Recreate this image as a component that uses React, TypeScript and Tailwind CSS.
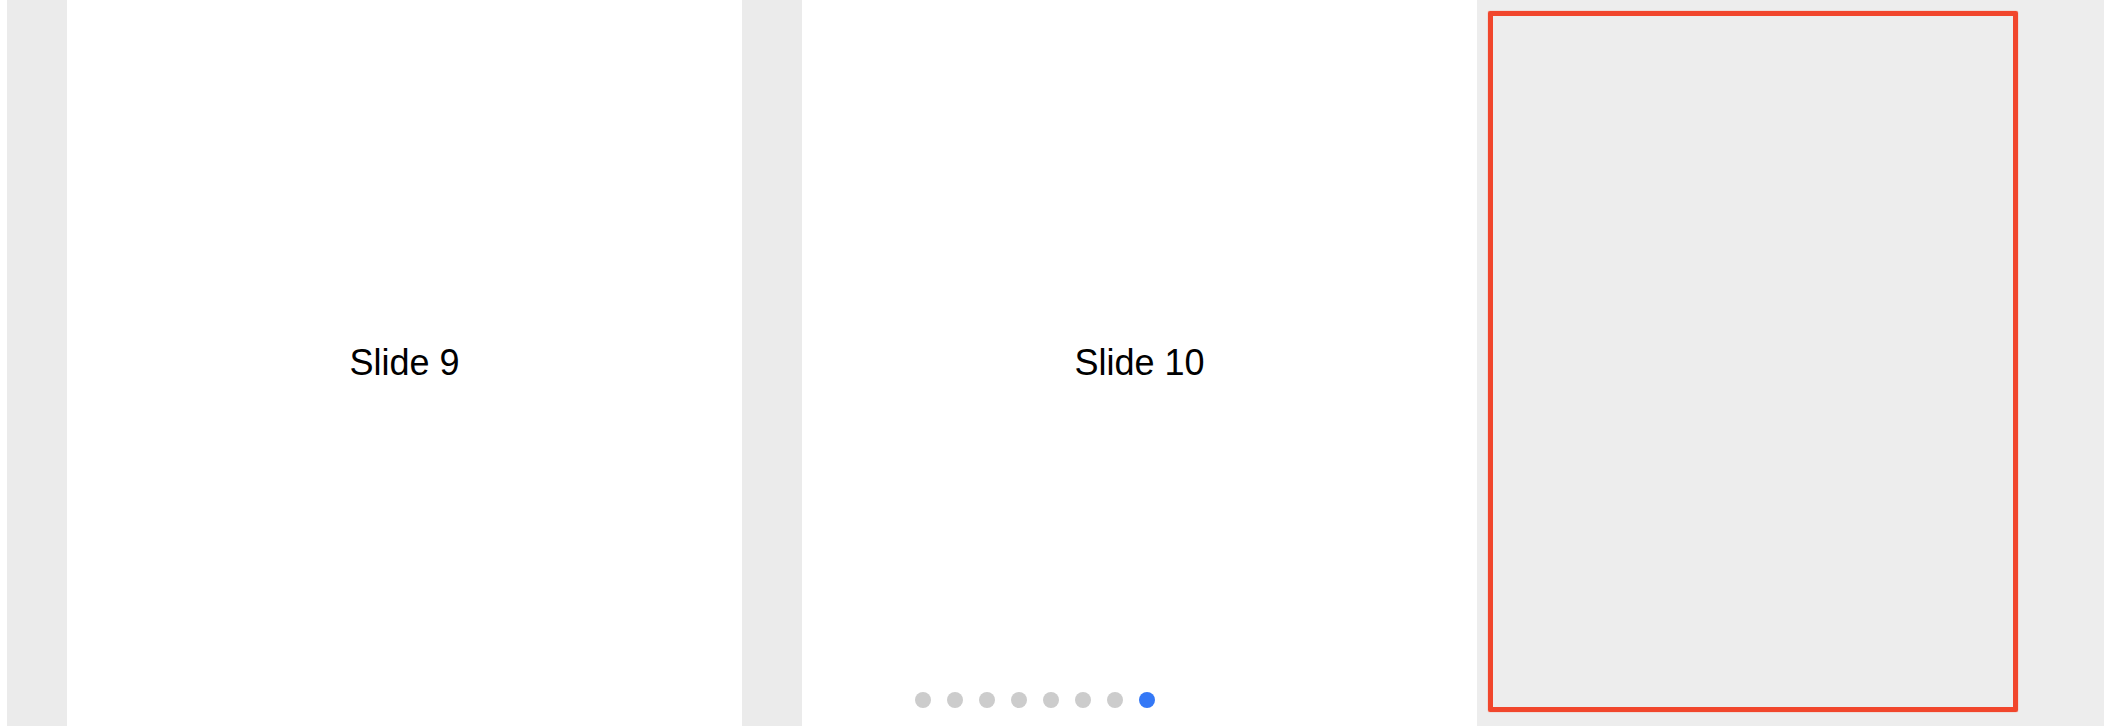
import React from "react";

const slides = [9, 10];
const dots = [1, 2, 3, 4, 5, 6, 7, 8];
const activeDot = 8;

const App = () => {
  return (
    <div className="relative flex h-[726px] w-[2104px] overflow-hidden bg-[#ebebeb] font-['Liberation_Sans',Arial,sans-serif]">
      {/* tail of slide 8 */}
      <div className="h-full w-[7px] shrink-0 bg-white mr-[60px]" />
      {slides.map((n, i) => (
        <div
          key={n}
          className={`flex h-full w-[675px] shrink-0 items-center justify-center bg-white text-[36px] text-black ${
            i === 0 ? "mr-[60px]" : ""
          }`}
        >
          Slide {n}
        </div>
      ))}
      <div className="h-full flex-1 bg-[#ededed] pl-[11px] pt-[11px]">
        <div className="h-[701px] w-[530px] rounded-[2px] border-[5px] border-[#f1462c] shadow-[0_0_1px_#f1462c]" />
      </div>
      <div className="absolute bottom-[18px] left-[915px] flex gap-[16px]">
        {dots.map((d) => (
          <span
            key={d}
            className={`block h-4 w-4 rounded-full ${
              d === activeDot ? "bg-[#3478f6]" : "bg-[#cccccc]"
            }`}
          />
        ))}
      </div>
    </div>
  );
};

export default App;
